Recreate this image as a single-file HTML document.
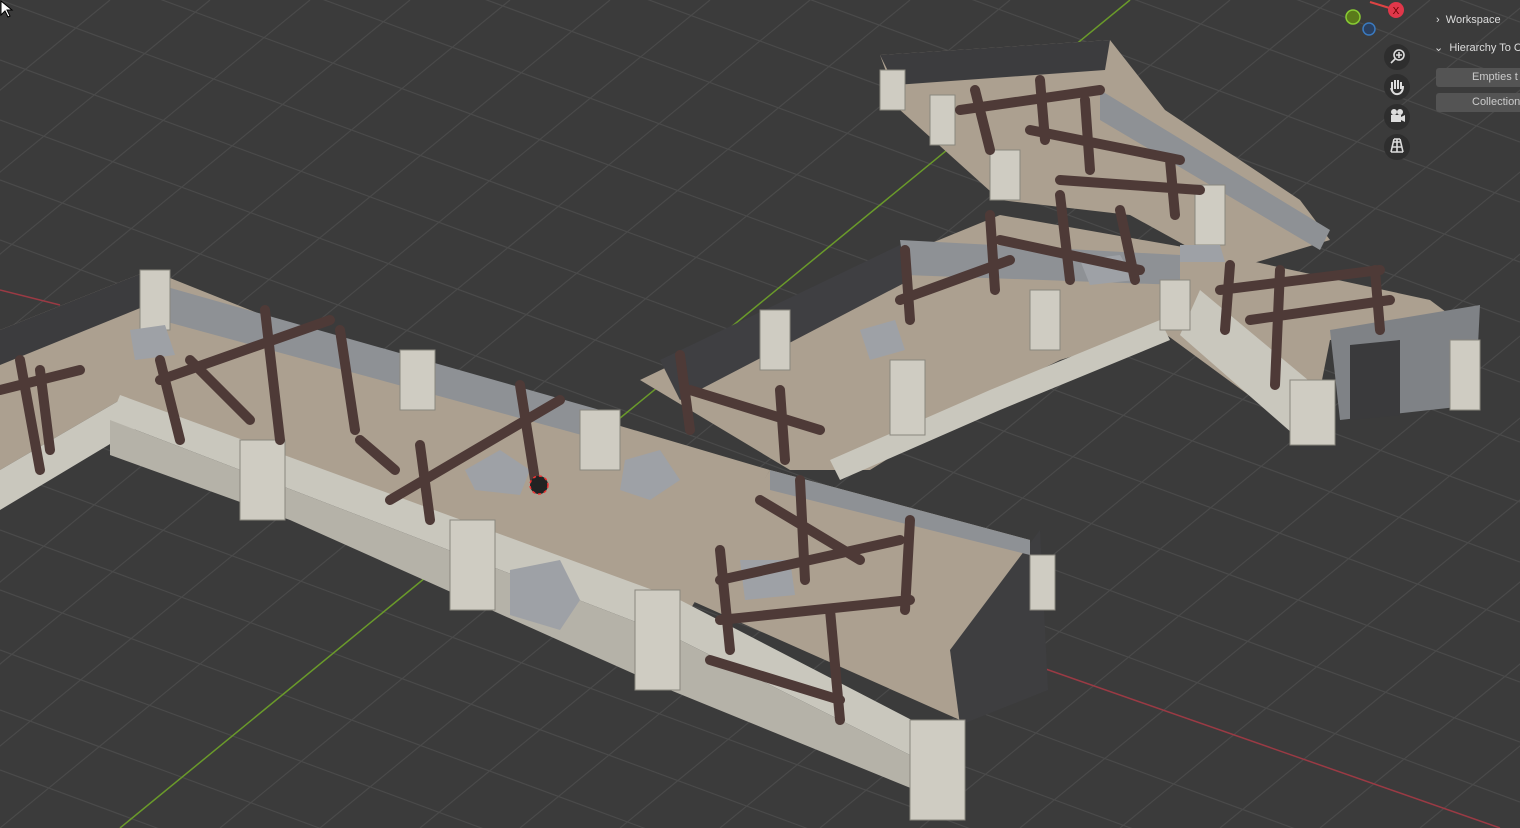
<!DOCTYPE html>
<html><head><meta charset="utf-8"><style>
html,body{margin:0;padding:0;width:1520px;height:828px;overflow:hidden;background:#3b3b3b;font-family:"Liberation Sans",sans-serif;position:relative}
svg{position:absolute;left:0;top:0;overflow:hidden}
.panel{position:absolute;left:1428px;top:0;width:92px;height:200px}
.row{position:absolute;color:#ddd;font-size:11px;white-space:nowrap}
.btn{position:absolute;left:1436px;width:84px;height:19px;background:#545454;border-radius:3px 0 0 3px;color:#ccc;font-size:11px;line-height:19px;overflow:hidden;white-space:nowrap}
</style></head><body>
<svg width="1520" height="828" viewBox="0 0 1520 828">
<g id="grid" stroke="#4a4a4a" stroke-width="1.2" fill="none">
<path d="M-900 828 L110 0 M-800 828 L210 0 M-700 828 L310 0 M-600 828 L410 0 M-500 828 L510 0 M-400 828 L610 0 M-300 828 L710 0 M-200 828 L810 0 M-100 828 L910 0 M0 828 L1010 0 M220 828 L1230 0 M320 828 L1330 0 M420 828 L1430 0 M520 828 L1530 0 M620 828 L1630 0 M720 828 L1730 0 M820 828 L1830 0 M920 828 L1930 0 M1020 828 L2030 0 M1120 828 L2130 0 M1220 828 L2230 0 M1320 828 L2330 0 M1420 828 L2430 0"/>
<path d="M0 -300 L1520 262 M0 -240 L1520 322 M0 -180 L1520 382 M0 -120 L1520 442 M0 -60 L1520 502 M0 0 L1520 562 M0 60 L1520 622 M0 120 L1520 682 M0 180 L1520 742 M0 240 L1520 802 M0 350 L1520 912 M0 410 L1520 972 M0 470 L1520 1032 M0 530 L1520 1092 M0 590 L1520 1152 M0 650 L1520 1212 M0 710 L1520 1272 M0 770 L1520 1332 M0 -360 L1520 202 M0 -420 L1520 142 M0 -480 L1520 82 M0 -540 L1520 22"/>
</g>
<path d="M120 828 L1130 0" stroke="#6a9a2a" stroke-width="1.5"/>
<path d="M0 290 L60 305 M1020 660 L1500 828" stroke="#9a3a44" stroke-width="1.5"/>

<polygon points="880,55 1110,40 1165,110 1300,200 1330,240 1230,270 1130,215 1000,200 900,110" fill="#aca090"/>
<polygon points="880,55 1110,40 1105,70 895,85" fill="#3c3c3e"/>
<polygon points="1100,90 1330,230 1320,250 1100,120" fill="#8e9195"/>
<polygon points="640,380 890,260 1000,215 1200,250 1430,300 1470,330 1330,340 1310,440 1160,330 1060,360 990,395 870,470 790,470" fill="#aca090"/>
<polygon points="660,360 900,245 910,280 680,400" fill="#3f3f42"/>
<polygon points="900,240 1180,255 1180,285 905,275" fill="#8e9195"/>
<polygon points="1330,330 1480,305 1475,405 1340,420" fill="#7f8286"/>
<polygon points="1350,345 1400,340 1400,415 1350,420" fill="#3a3a3c"/>
<polygon points="1200,290 1320,390 1300,440 1180,335" fill="#c9c7bd"/>
<polygon points="830,460 990,390 1160,320 1170,340 1000,410 840,480" fill="#c9c7bd"/>
<polygon points="0,330 150,270 300,330 600,420 770,470 690,610 520,560 300,470 120,400 0,470" fill="#aca090"/>
<polygon points="0,330 150,270 160,300 0,365" fill="#3c3c3e"/>
<polygon points="160,285 600,410 600,440 160,320" fill="#8e9195"/>
<polygon points="0,470 120,400 150,420 0,510" fill="#c9c7bd"/>
<polygon points="120,395 680,600 960,745 950,775 670,635 110,420" fill="#c9c7bd"/>
<polygon points="110,420 670,635 950,775 940,800 670,690 290,520 110,455" fill="#b5b2a8"/>
<polygon points="690,600 770,470 1030,540 1000,700 960,720" fill="#aca090"/>
<polygon points="950,650 1040,530 1048,690 960,725" fill="#3e3e40"/>
<polygon points="770,470 1030,540 1030,555 770,490" fill="#8e9195"/>
<g fill="#cfccc2" stroke="#8a877e" stroke-width="1">
<rect x="240" y="440" width="45" height="80"/><rect x="450" y="520" width="45" height="90"/>
<rect x="635" y="590" width="45" height="100"/><rect x="910" y="720" width="55" height="100"/>
<rect x="580" y="410" width="40" height="60"/><rect x="400" y="350" width="35" height="60"/>
<rect x="140" y="270" width="30" height="60"/><rect x="760" y="310" width="30" height="60"/>
<rect x="890" y="360" width="35" height="75"/><rect x="1030" y="290" width="30" height="60"/>
<rect x="1160" y="280" width="30" height="50"/><rect x="1290" y="380" width="45" height="65"/>
<rect x="1450" y="340" width="30" height="70"/><rect x="990" y="150" width="30" height="50"/>
<rect x="930" y="95" width="25" height="50"/><rect x="880" y="70" width="25" height="40"/>
<rect x="1195" y="185" width="30" height="60"/><rect x="1030" y="555" width="25" height="55"/>
</g>
<g fill="#9ea1a6">
<polygon points="465,470 500,450 530,470 520,495 475,490"/><polygon points="625,460 660,450 680,480 650,500 620,490"/>
<polygon points="510,570 560,560 580,600 560,630 510,615"/><polygon points="860,330 895,320 905,350 870,360"/>
<polygon points="130,330 165,325 175,355 135,360"/><polygon points="1080,260 1120,255 1135,280 1090,285"/>
<polygon points="740,560 790,560 795,595 745,600"/><polygon points="1180,245 1220,245 1225,262 1180,262"/>
</g>
<g stroke="#4e3a37" stroke-width="10" stroke-linecap="round" fill="none">
<path d="M265 310 L280 440 M340 330 L355 430 M160 360 L180 440 M520 385 L535 480 M420 445 L430 520 M680 355 L690 430 M780 390 L785 460 M160 380 L330 320 M390 500 L560 400 M690 390 L820 430 M190 360 L250 420 M360 440 L395 470"/>
<path d="M720 550 L730 650 M800 480 L805 580 M910 520 L905 610 M830 610 L840 720 M720 580 L900 540 M710 660 L840 700 M720 620 L910 600 M760 500 L860 560"/>
<path d="M905 250 L910 320 M990 215 L995 290 M1060 195 L1070 280 M1120 210 L1135 280 M1230 265 L1225 330 M1280 270 L1275 385 M1375 270 L1380 330 M900 300 L1010 260 M1000 240 L1140 270 M1220 290 L1380 270 M1250 320 L1390 300"/>
<path d="M975 90 L990 150 M1040 80 L1045 140 M1085 100 L1090 170 M1170 160 L1175 215 M960 110 L1100 90 M1030 130 L1180 160 M1060 180 L1200 190"/>
<path d="M0 390 L80 370 M40 370 L50 450 M20 360 L40 470"/>
</g>
<circle cx="539" cy="485" r="9" fill="#222" stroke="#e33" stroke-width="1.5" stroke-dasharray="3 3"/>
<line x1="1370" y1="2" x2="1396" y2="10" stroke="#d44" stroke-width="2"/>
<circle cx="1396" cy="10" r="8" fill="#e0374a"/><text x="1396" y="14" font-size="10" fill="#600" text-anchor="middle" font-family="Liberation Sans">X</text>
<circle cx="1353" cy="17" r="7" fill="#5a7a1a" stroke="#8c3" stroke-width="1.5"/>
<circle cx="1369" cy="29" r="6" fill="#2a4060" stroke="#3a7ac0" stroke-width="1.5"/>
<g fill="#2e2e2e"><circle cx="1397" cy="57" r="13"/><circle cx="1397" cy="87" r="13"/><circle cx="1397" cy="117" r="13"/><circle cx="1397" cy="147" r="13"/></g>
<g fill="none" stroke="#ddd" stroke-width="1.6">
<circle cx="1399" cy="55" r="5"/><path d="M1395 59 L1391 63 M1399 52 V58 M1396 55 H1402"/>
<path d="M1392 147 L1402 147 M1393 142 L1401 142 M1391 152 L1403 152 M1394 139 L1391 152 M1397 139 L1397 152 M1400 139 L1403 152 M1394 139 H1400"/>
</g>
<path d="M1392 90 V82 M1395 89 V80 M1398 89 V80 M1401 89 V82 M1391 88 Q1393 95 1398 94 Q1403 93 1403 86" stroke="#ddd" stroke-width="2" fill="none"/>
<rect x="1391" y="115" width="10" height="7" fill="#ddd"/><circle cx="1394" cy="112" r="3" fill="#ddd"/><circle cx="1400" cy="112" r="3" fill="#ddd"/><polygon points="1401,117 1405,115 1405,122 1401,120" fill="#ddd"/>
<polygon points="1,1 1,15 5,11 8,17 10,16 7,10 12,10" fill="#fff" stroke="#000" stroke-width="1"/>
</svg>
<div class="panel">
<div class="row" style="left:8px;top:14px">›&nbsp;&nbsp;Workspace</div>
<div class="row" style="left:6px;top:41px">⌄&nbsp;&nbsp;Hierarchy To C</div>
</div>
<div class="btn" style="top:68px"><span style="margin-left:36px">Empties t</span></div>
<div class="btn" style="top:93px"><span style="margin-left:36px">Collection</span></div>
</body></html>
